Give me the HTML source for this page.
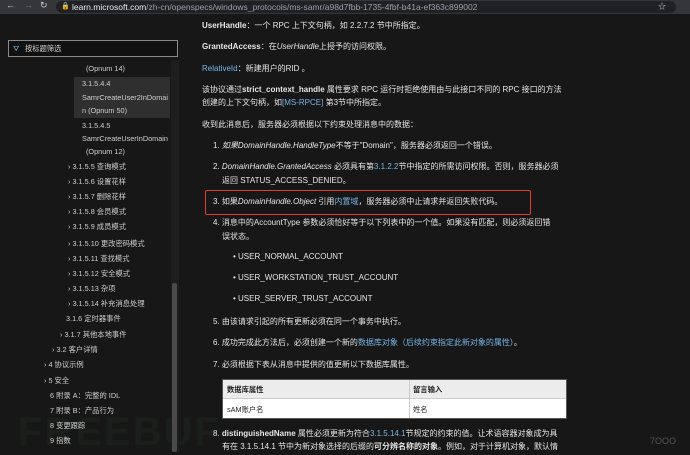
<!DOCTYPE html>
<html><head><meta charset="utf-8"><style>
*{margin:0;padding:0;box-sizing:border-box}
body{width:690px;height:452px;overflow:hidden;background:#171717;font-family:"Liberation Sans","Noto Sans CJK SC",sans-serif;color:#e6e6e6;position:relative;font-size:8px}
.top{position:absolute;left:0;top:0;width:690px;height:14px;background:#35363a}
.url{position:absolute;left:56px;top:1px;width:620px;height:12px;background:#202124;border-radius:6px;font-size:8.5px;line-height:12px;padding-left:16px;color:#9aa0a6}
.url b{color:#e8eaed;font-weight:normal}
.a{position:absolute;white-space:nowrap}
.s{color:#d0d0d0;font-size:7.3px}
.lk{color:#75b6e7}
i{font-style:italic}
.c .a{margin-top:-2px}
</style></head><body>
<div class="top">
<span class="a" style="left:6px;top:0;color:#ccc;font-size:9px">←</span>
<span class="a" style="left:24px;top:0;color:#777;font-size:9px">→</span>
<span class="a" style="left:40px;top:0;color:#ccc;font-size:9px">↻</span>
<div class="url"><span style="position:absolute;left:5px;font-size:7px">🔒</span><b>learn.microsoft.com</b>/zh-cn/openspecs/windows_protocols/ms-samr/a98d7fbb-1735-4fbf-b41a-ef363c899002</div>
<span class="a" style="left:658px;top:1px;color:#ccc;font-size:8px">☆</span>
</div>
<div class="a" style="left:18px;top:410px;font-size:40px;font-weight:bold;color:#1a1f1b;letter-spacing:2px">FREEBUF</div>
<div class="a" style="left:8px;top:40px;width:170px;height:17px;border:1px solid #8a8a8a;background:#111"></div>
<span class="a s" style="left:13px;top:44px;color:#75b6e7">⛛</span>
<span class="a s" style="left:25px;top:44px">按标题筛选</span>
<div class="a" style="left:74px;top:77px;width:96px;height:41px;background:#2f2f2f"></div>
<div class="a" style="left:171px;top:60px;width:8px;height:392px;background:#1e1e1e"></div>
<div class="a" style="left:172px;top:283px;width:5px;height:169px;background:#4a4a4a;border-radius:2px"></div>
<div class="s">
<span class="a" style="left:86px;top:64px">(Opnum 14)</span>
<span class="a" style="left:82px;top:79px">3.1.5.4.4</span>
<span class="a" style="left:82px;top:93px">SamrCreateUser2InDomai</span>
<span class="a" style="left:82px;top:106px">n (Opnum 50)</span>
<span class="a" style="left:82px;top:121px">3.1.5.4.5</span>
<span class="a" style="left:82px;top:134px">SamrCreateUserInDomain</span>
<span class="a" style="left:86px;top:147px">(Opnum 12)</span>
<span class="a" style="left:68px;top:162px">› 3.1.5.5 查询模式</span>
<span class="a" style="left:68px;top:177px">› 3.1.5.6 设置花样</span>
<span class="a" style="left:68px;top:192px">› 3.1.5.7 删除花样</span>
<span class="a" style="left:68px;top:207px">› 3.1.5.8 会员模式</span>
<span class="a" style="left:68px;top:222px">› 3.1.5.9 成员模式</span>
<span class="a" style="left:68px;top:239px">› 3.1.5.10 更改密码模式</span>
<span class="a" style="left:68px;top:254px">› 3.1.5.11 查找模式</span>
<span class="a" style="left:68px;top:269px">› 3.1.5.12 安全模式</span>
<span class="a" style="left:68px;top:284px">› 3.1.5.13 杂项</span>
<span class="a" style="left:68px;top:299px">› 3.1.5.14 补充消息处理</span>
<span class="a" style="left:66px;top:314px">3.1.6 定时器事件</span>
<span class="a" style="left:60px;top:330px">› 3.1.7 其他本地事件</span>
<span class="a" style="left:52px;top:345px">› 3.2 客户详情</span>
<span class="a" style="left:44px;top:360px">› 4 协议示例</span>
<span class="a" style="left:44px;top:376px">› 5 安全</span>
<span class="a" style="left:50px;top:391px">6 附录 A：完整的 IDL</span>
<span class="a" style="left:50px;top:406px">7 附录 B：产品行为</span>
<span class="a" style="left:50px;top:421px">8 变更跟踪</span>
<span class="a" style="left:50px;top:436px">9 指数</span>
</div>
<div class="c">
<span class="a" style="left:202px;top:22px"><b>UserHandle</b>：一个 RPC 上下文句柄，如 2.2.7.2 节中所指定。</span>
<span class="a" style="left:202px;top:43px"><b>GrantedAccess</b>：在<i>UserHandle</i>上授予的访问权限。</span>
<span class="a" style="left:202px;top:65px"><span class="lk">RelativeId</span>：新建用户的RID 。</span>
<span class="a" style="left:202px;top:86px">该协议通过<b>strict_context_handle</b> 属性要求 RPC 运行时拒绝使用由与此接口不同的 RPC 接口的方法</span>
<span class="a" style="left:202px;top:99px">创建的上下文句柄，如<span class="lk">[MS-RPCE]</span> 第3节中所指定。</span>
<span class="a" style="left:202px;top:121px">收到此消息后，服务器必须根据以下约束处理消息中的数据：</span>
<span class="a" style="left:213px;top:142px">1. <i>如果DomainHandle.HandleType</i>不等于"Domain"，服务器必须返回一个错误。</span>
<span class="a" style="left:213px;top:163px">2. <i>DomainHandle.GrantedAccess</i> 必须具有第<span class="lk">3.1.2.2</span>节中指定的所需访问权限。否则，服务器必须</span>
<span class="a" style="left:222px;top:177px">返回 STATUS_ACCESS_DENIED。</span>
<span class="a" style="left:213px;top:198px">3. 如果<i>DomainHandle.Object</i> 引用<span class="lk">内置域</span>，服务器必须中止请求并返回失败代码。</span>
<span class="a" style="left:213px;top:219px">4. 消息中的AccountType 参数必须恰好等于以下列表中的一个值。如果没有匹配，则必须返回错</span>
<span class="a" style="left:222px;top:233px">误状态。</span>
<span class="a" style="left:233px;top:254px">• USER_NORMAL_ACCOUNT</span>
<span class="a" style="left:233px;top:275px">• USER_WORKSTATION_TRUST_ACCOUNT</span>
<span class="a" style="left:233px;top:296px">• USER_SERVER_TRUST_ACCOUNT</span>
<span class="a" style="left:213px;top:318px">5. 由该请求引起的所有更新必须在同一个事务中执行。</span>
<span class="a" style="left:213px;top:339px">6. 成功完成此方法后，必须创建一个新的<span class="lk">数据库对象（后续约束指定此新对象的属性）</span>。</span>
<span class="a" style="left:213px;top:361px">7. 必须根据下表从消息中提供的值更新以下数据库属性。</span>
<span class="a" style="left:213px;top:430px">8. <b>distinguishedName</b> 属性必须更新为符合<span class="lk">3.1.5.14.1</span>节规定的约束的值。让术语容器对象成为具</span>
<span class="a" style="left:222px;top:443px">有在 3.1.5.14.1 节中为新对象选择的后缀的<b>可分辨名称的对象</b>。例如，对于计算机对象，默认情</span>
</div>
<div class="a" style="left:205px;top:190px;width:326px;height:25px;border:1.5px solid #e0402c;border-radius:2px"></div>
<div class="a" style="left:222px;top:379px;width:345px;height:40px;background:#fff;border:1px solid #555"></div>
<div class="a" style="left:223px;top:380px;width:343px;height:19px;background:#ececec;border-bottom:1px solid #ccc"></div>
<div class="a" style="left:409px;top:380px;width:1px;height:38px;background:#ccc"></div>
<span class="a s" style="left:227px;top:385px;color:#222;font-weight:bold">数据库属性</span>
<span class="a s" style="left:413px;top:385px;color:#222;font-weight:bold">留言输入</span>
<span class="a s" style="left:227px;top:405px;color:#222">sAM账户名</span>
<span class="a s" style="left:413px;top:405px;color:#222">姓名</span>
<span class="a" style="left:650px;top:436px;color:#555;font-size:9px">7OOO</span>
</body></html>
